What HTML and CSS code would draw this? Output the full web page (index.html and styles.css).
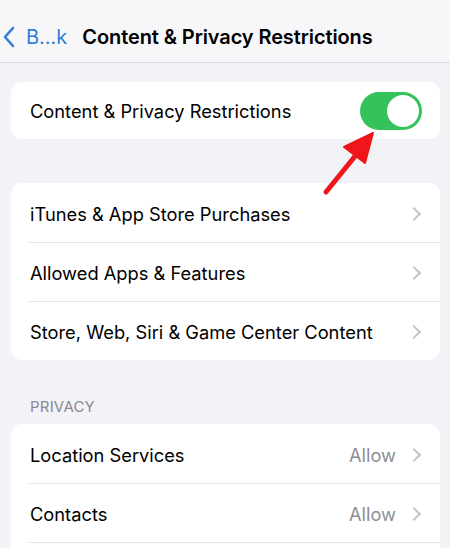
FILE: index.html
```html
<!DOCTYPE html>
<html lang="en">
<head>
    <meta charset="UTF-8">
    <meta name="viewport" content="width=device-width, initial-scale=1.0">
    <title>Content &amp; Privacy Restrictions</title>
    <link rel="stylesheet" href="styles.css">
</head>
<body>
    <div class="navbar">
        <a class="back" href="#">
            <svg class="back-icon" width="14" height="22" viewBox="0 0 14 22">
                <path d="M11 2 L3 11 L11 20" fill="none" stroke="#2f7fd6" stroke-width="2.6" stroke-linecap="round" stroke-linejoin="round"/>
            </svg>
            <span>B...k</span>
        </a>
        <h1 class="title">Content &amp; Privacy Restrictions</h1>
    </div>

    <div class="content">
        <div class="card">
            <div class="row toggle-row">
                <span class="label">Content &amp; Privacy Restrictions</span>
                <span class="switch on"><span class="knob"></span></span>
            </div>
        </div>

        <div class="card">
            <div class="row"><span class="label">iTunes &amp; App Store Purchases</span><span class="chevron"></span></div>
            <div class="row"><span class="label">Allowed Apps &amp; Features</span><span class="chevron"></span></div>
            <div class="row"><span class="label">Store, Web, Siri &amp; Game Center Content</span><span class="chevron"></span></div>
        </div>

        <div class="section-title">PRIVACY</div>
        <div class="card">
            <div class="row"><span class="label">Location Services</span><span class="value">Allow</span><span class="chevron"></span></div>
            <div class="row"><span class="label">Contacts</span><span class="value">Allow</span><span class="chevron"></span></div>
            <div class="row"></div>
        </div>
    </div>

    <!-- red pointer drawn on top of the settings -->
    <svg class="pointer" width="80" height="80" viewBox="0 0 80 80">
        <line x1="8" y1="67" x2="38" y2="30" stroke="#f0141b" stroke-width="5" stroke-linecap="round"/>
        <polygon points="55,8 47,38 26,22" fill="#f0141b" stroke="#f0141b" stroke-width="2" stroke-linejoin="round"/>
    </svg>
</body>
</html>
```

FILE: styles.css
```css
body {
    margin: 0;
    height: 548px;
    background-color: #f2f2f7;
    font-family: Inter, "Noto Sans", sans-serif;
    color: #000;
    overflow: hidden;
}
.navbar {
    height: 63px;
    box-sizing: border-box;
    padding-top: 12px;
    display: flex;
    align-items: center;
    background-color: #f7f7f9;
    border-bottom: 1px solid #dedee2;
}
.back {
    display: flex;
    align-items: center;
    padding-left: 2px;
    color: #2f7fd6;
    text-decoration: none;
    font-size: 20px;
}
.back span {
    margin-left: 10px;
}
.title {
    margin: 0 0 0 15px;
    font-size: 20px;
    font-weight: 600;
    letter-spacing: -0.1px;
}
.content {
    padding: 19px 10px 0 11px;
}
.card {
    background-color: #fff;
    border-radius: 11px;
    margin-bottom: 44px;
    overflow: hidden;
}
.row {
    height: 59px;
    box-sizing: border-box;
    padding: 3px 17px 0 19px;
    display: flex;
    align-items: center;
    font-size: 18.3px;
    position: relative;
}
.row + .row::before {
    content: "";
    position: absolute;
    top: 0;
    left: 18px;
    right: 0;
    border-top: 1px solid #e3e3e6;
}
.toggle-row {
    height: 57px;
    padding: 1px 18px 0 19px;
}
.label {
    flex: 1;
}
.value {
    color: #8e8e93;
    margin-right: 13px;
}
.chevron {
    width: 8px;
    height: 8px;
    border-top: 2px solid #c4c4c8;
    border-right: 2px solid #c4c4c8;
    transform: rotate(45deg);
    margin-right: 4px;
}
.switch {
    width: 62px;
    height: 38px;
    border-radius: 19px;
    background-color: #35c25a;
    display: flex;
    align-items: center;
    justify-content: flex-end;
    padding: 0 3px;
    box-sizing: border-box;
}
.knob {
    width: 32px;
    height: 32px;
    border-radius: 50%;
    background-color: #fff;
}
.section-title {
    margin: -7px 0 8px 19px;
    font-size: 15px;
    color: #8a8a8e;
    letter-spacing: 0.2px;
}
.pointer {
    position: absolute;
    left: 318px;
    top: 125px;
}
```
